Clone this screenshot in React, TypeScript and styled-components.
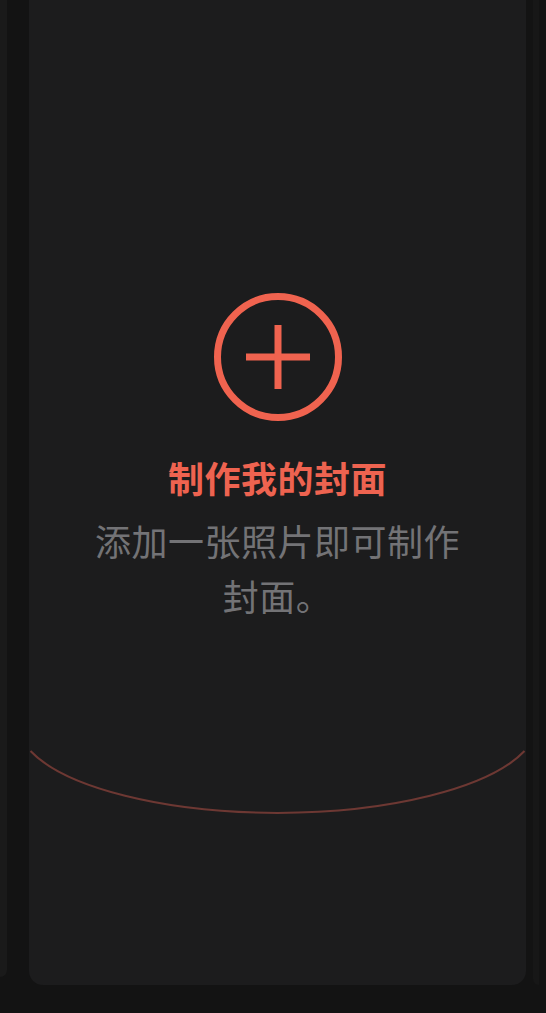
import React from 'react';
import styled, { createGlobalStyle } from 'styled-components';

const GlobalStyle = createGlobalStyle`
  html, body {
    margin: 0;
    padding: 0;
    background: #131313;
  }
  body {
    font-family: 'Noto Sans CJK SC', 'Noto Sans', sans-serif;
  }
`;

const Page = styled.div`
  display: flex;
  width: 546px;
  height: 1013px;
  overflow: hidden;
  background: #131313;
`;

const SideCard = styled.div<{ $side: 'left' | 'right' }>`
  flex: none;
  width: ${(p) => (p.$side === 'left' ? '7px' : '6px')};
  height: ${(p) => (p.$side === 'left' ? '977px' : '985px')};
  background: ${(p) => (p.$side === 'left' ? '#1a1a1a' : '#171717')};
  border-radius: ${(p) => (p.$side === 'left' ? '0 0 10px 0' : '0 0 0 10px')};
  margin-left: ${(p) => (p.$side === 'left' ? '0' : '7px')};
`;

const Card = styled.div`
  flex: none;
  width: 497px;
  height: 985px;
  margin-left: 22px;
  background: #1c1c1d;
  border-radius: 0 0 14px 14px;
  display: flex;
  flex-direction: column;
  align-items: center;
`;

const Content = styled.div`
  display: flex;
  flex-direction: column;
  align-items: center;
  padding-top: 293px;
  width: 100%;
`;

const AddIcon = styled.svg`
  display: block;
  width: 128px;
  height: 128px;
`;

const Title = styled.div`
  margin-top: 31px;
  font-size: 36px;
  line-height: 50px;
  font-weight: 700;
  color: #ee6350;
  letter-spacing: 0.5px;
`;

const Subtitle = styled.div`
  margin-top: 11px;
  max-width: 380px;
  font-size: 36px;
  line-height: 55px;
  font-weight: 400;
  color: #737376;
  text-align: center;
  letter-spacing: 0.5px;
`;

const Arc = styled.svg`
  display: block;
  margin-top: 126px;
  width: 497px;
  height: 70px;
`;

export default function App() {
  return (
    <>
      <GlobalStyle />
      <Page>
        <SideCard $side="left" />
        <Card>
          <Content>
            <AddIcon viewBox="0 0 128 128" fill="none">
              <circle cx="64" cy="64" r="60.5" stroke="#f0634f" strokeWidth="7" />
              <line x1="32" y1="64" x2="96" y2="64" stroke="#f0634f" strokeWidth="7" />
              <line x1="64" y1="32" x2="64" y2="96" stroke="#f0634f" strokeWidth="7" />
            </AddIcon>
            <Title>制作我的封面</Title>
            <Subtitle>添加一张照片即可制作封面。</Subtitle>
          </Content>
          <Arc viewBox="0 0 497 70" fill="none">
            <path d="M1.5 2 A 260 90 0 0 0 495.5 2" stroke="#6d3833" strokeWidth="2" />
          </Arc>
        </Card>
        <SideCard $side="right" />
      </Page>
    </>
  );
}
